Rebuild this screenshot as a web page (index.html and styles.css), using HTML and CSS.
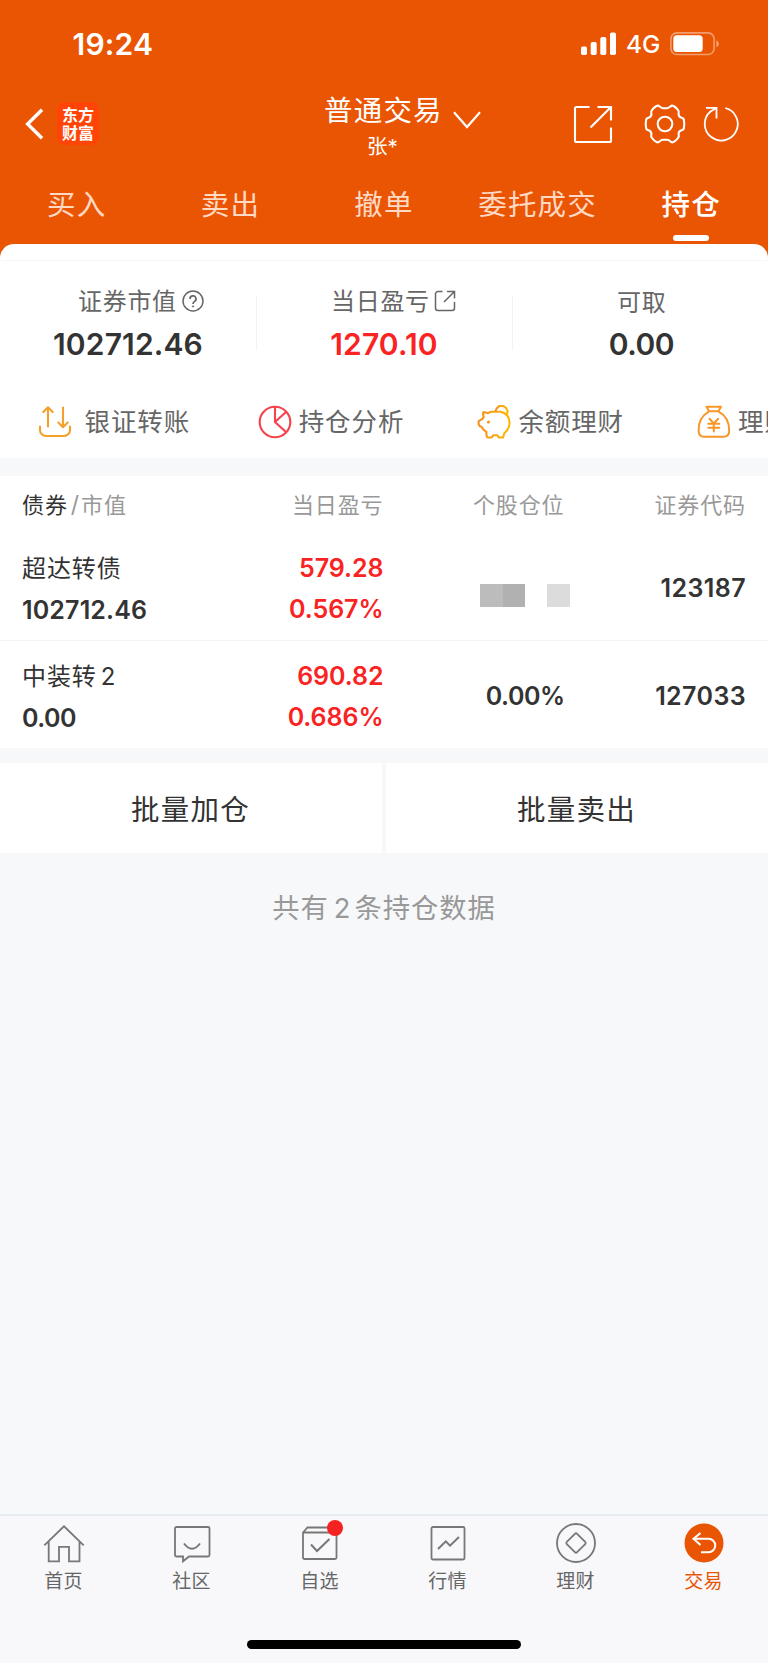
FILE: index.html
```html
<!DOCTYPE html>
<html lang="zh-CN">
<head>
<meta charset="utf-8">
<title>普通交易 - 持仓</title>
<link rel="stylesheet" href="styles.css">
</head>
<body>
<div class="app">
  <header class="header">
    <div class="status">
      <span class="time">19:24</span>
      <div class="status-right">
        <svg class="signal" width="36" height="24" viewBox="0 0 36 24" fill="#fff"><rect x="0" y="14.5" width="6" height="8.5" rx="1.8"/><rect x="9.7" y="10" width="6" height="13" rx="1.8"/><rect x="19.3" y="5" width="6" height="18" rx="1.8"/><rect x="29" y="0.5" width="6" height="22.5" rx="1.8"/></svg>
        <span class="net">4G</span>
        <svg class="battery" width="50" height="24" viewBox="0 0 50 24"><rect x="0.9" y="0.9" width="43.2" height="21.6" rx="6" fill="none" stroke="#fff" stroke-opacity=".42" stroke-width="1.6"/><rect x="3.3" y="3.3" width="29.4" height="16.8" rx="3.6" fill="#fff"/><path d="M46.3 8.2q2.6 1.2 2.6 3.5t-2.6 3.5z" fill="#fff" fill-opacity=".45"/></svg>
      </div>
    </div>
    <div class="nav">
      <div class="nav-left">
        <svg width="20" height="34" viewBox="0 0 20 34" fill="none" stroke="#fff" stroke-width="3.4"><path d="M17 2.8 2.6 17 17 31.2"/></svg>
        <div class="logo"><span>东方</span><span>财富</span></div>
      </div>
      <div class="nav-title">
        <div class="account">普通交易</div>
        <div class="owner">张*</div>
      </div>
      <svg class="caret" width="30" height="20" viewBox="0 0 30 20" fill="none" stroke="#fff" stroke-width="2.2"><path d="M2 2.2 15 17 28 2.2"/></svg>
      <div class="nav-icons">
        <svg width="40" height="40" viewBox="0 0 40 40" fill="none" stroke="#fff" stroke-width="2.1"><path d="M16.500 2H3.500A1.500 1.500 0 0 0 2 3.500v32A1.500 1.500 0 0 0 3.500 37h33A1.500 1.500 0 0 0 38 35.500V22.500M24.500 2h13.500v13.500M38 2 17.500 22.500"/></svg>
        <svg class="gear" width="44" height="44" viewBox="-22 -22 44 44" fill="none" stroke="#fff" stroke-width="2.1" stroke-linejoin="round"><path d="M18.800 -4.500Q19.800 0 18.800 4.500Q18.300 5.800 16.500 6.200Q13.600 7.200 13.600 10Q14.300 12.800 13 14Q11 16.800 8.500 18Q6.800 18.800 5.500 17.600Q3.800 15.800 2 15.800H-2Q-3.800 15.800 -5.500 17.600Q-6.800 18.800 -8.500 18Q-11 16.800 -13 14Q-14.300 12.800 -13.600 10Q-13.600 7.200 -16.500 6.200Q-18.300 5.800 -18.800 4.500Q-19.800 0 -18.800 -4.500Q-18.300 -5.800 -16.500 -6.200Q-13.600 -7.200 -13.600 -10Q-14.300 -12.800 -13 -14Q-11 -16.800 -8.500 -18Q-6.800 -18.800 -5.500 -17.600Q-3.800 -15.800 -2 -15.800H2Q3.800 -15.800 5.500 -17.600Q6.800 -18.800 8.500 -18Q11 -16.800 13 -14Q14.300 -12.800 13.600 -10Q13.600 -7.200 16.500 -6.200Q18.300 -5.800 18.800 -4.500Z"/><circle r="7.300"/></svg>
        <svg class="refresh" width="38" height="38" viewBox="0 0 38 38" fill="none" stroke="#fff" stroke-width="1.800"><path d="M23.300 3A16.500 16.500 0 1 1 8.500 6.500L14.500 2.900M4 2.900H14.500V13.500"/></svg>
      </div>
    </div>
    <nav class="tabs">
      <span class="tab">买入</span><span class="tab">卖出</span><span class="tab">撤单</span><span class="tab">委托成交</span><span class="tab on">持仓</span>
    </nav>
  </header>

  <section class="panel">
    <div class="stats">
      <div class="stat">
        <div class="label">证券市值<svg width="22" height="22" viewBox="0 0 22 22" fill="none" stroke="#666" stroke-width="1.500"><circle cx="11" cy="11" r="10"/><path d="M8 9a3 3 0 1 1 4.600 2.400c-1.100.8-1.600 1.300-1.600 2.500" stroke-width="1.700"/><circle cx="11" cy="16.400" r=".6" fill="#666" stroke-width="1"/></svg></div>
        <div class="value">102712.46</div>
      </div>
      <div class="stat">
        <div class="label">当日盈亏<svg class="out" width="22" height="22" viewBox="0 0 22 22" fill="none" stroke="#666" stroke-width="1.500"><path d="M8.500 1.500H4A2.500 2.500 0 0 0 1.500 4v14A2.500 2.500 0 0 0 4 20.500h14a2.500 2.500 0 0 0 2.500-2.500v-6M13 1.500h7.500v7M20.500 1.500 10 12"/></svg></div>
        <div class="value red">1270.10</div>
      </div>
      <div class="stat">
        <div class="label low">可取</div>
        <div class="value zero">0.00</div>
      </div>
    </div>
    <div class="actions">
      <div class="action wide"><svg width="34" height="34" viewBox="0 0 34 34" fill="none" stroke="#f3a02c" stroke-width="2.100" stroke-linecap="round" stroke-linejoin="round"><path d="M2 21.500v3.500a6 6 0 0 0 6 6h18a6 6 0 0 0 6-6v-3.500M10 21.500V2.500M5.300 7 10 2.300 14.700 7M25 2.500v19.500M20.300 17.500 25 22.200 29.700 17.500"/></svg><span>银证转账</span></div>
      <div class="action"><svg width="34" height="34" viewBox="0 0 34 34" fill="none" stroke="#f5424b" stroke-width="2.100"><circle cx="17" cy="17" r="15.300"/><path d="M17 1.700V17l11.200 10.300M17 17 28.500 6.500"/></svg><span>持仓分析</span></div>
      <div class="action"><svg width="34" height="34" viewBox="0 0 34 34" fill="none" stroke="url(#pig)" stroke-width="2.100" stroke-linejoin="round"><defs><linearGradient id="pig" x1="0" x2="1"><stop stop-color="#f5901e"/><stop offset="1" stop-color="#fbb900"/></linearGradient></defs><path d="M8.800 7.600Q5.700 6.400 6 8.500L6.700 12Q5.600 14.600 2.600 15.500Q1.300 16 1.600 17.700V19.200Q2 21 4.500 21.700Q6 24.800 9.400 27Q9.300 32.500 10.700 32.500H14.800L16.200 30.300H20.500L21.800 32.500H26L27.300 28.300Q32.800 23.500 32.500 17.300Q32 8.500 23.500 6.800H14.500Q12.500 7 11 8.300Z"/><path d="M18.500 6.500A6 6 0 1 1 29.200 10.500"/><circle cx="11.500" cy="17" r="1.600" fill="#f59a18" stroke="none"/></svg><span>余额理财</span></div>
      <div class="action"><svg width="34" height="34" viewBox="0 0 34 34" fill="none" stroke="#f8962a" stroke-width="2" stroke-linecap="round" stroke-linejoin="round"><path d="M9.500 1.700h14.500l-2.600 4.600h-9.300ZM12.100 6.300C5.500 10 1.500 17 1.600 25.500C1.700 30 3.500 31.800 7 31.800H26.500C30.500 31.800 32.200 30 32.200 25.500C32.300 17 28 10 21.400 6.300M12.500 13.800l4.300 4.700 4.300-4.700M11.300 18.800h11M11.300 22.800h11M16.800 18.500v8"/></svg><span>理财</span></div>
    </div>
  </section>

  <section class="holdings">
    <div class="row head">
      <span class="c1"><b>债券</b><i>/</i>市值</span><span class="c2">当日盈亏</span><span class="c3">个股仓位</span><span class="c4">证券代码</span>
    </div>
    <div class="row item line">
      <div class="c1"><div class="name">超达转债</div><div class="num">102712.46</div></div>
      <div class="c2 red num"><div>579.28</div><div>0.567%</div></div>
      <div class="c3"><div class="mask"><span class="m1"></span><span class="m2"></span><span class="m3"></span></div></div>
      <div class="c4 num">123187</div>
    </div>
    <div class="row item">
      <div class="c1"><div class="name">中装转<span class="digit">2</span></div><div class="num zero">0.00</div></div>
      <div class="c2 red num"><div>690.82</div><div>0.686%</div></div>
      <div class="c3 num zero">0.00%</div>
      <div class="c4 num">127033</div>
    </div>
  </section>

  <div class="batch"><div class="btn">批量加仓</div><div class="btn">批量卖出</div></div>
  <main class="rest">共有<span class="digit">2</span>条持仓数据</main>

  <footer class="tabbar">
    <div class="bar-items">
      <div class="bar-item"><svg width="44" height="44" viewBox="0 0 44 44"><path d="M2.300 23.300 22 4.300 41.700 23.300M6.700 19.500V39.300H17V24.800H27V39.300H37.500V19.500"/></svg><span>首页</span></div>
      <div class="bar-item"><svg width="44" height="44" viewBox="0 0 44 44"><path d="M6.500 5h31.500A1.500 1.500 0 0 1 39.500 6.500V33A1.500 1.500 0 0 1 38 34.500H19L13 39.300V34.500H6.500A1.500 1.500 0 0 1 5 33V6.500A1.500 1.500 0 0 1 6.500 5Z"/><path d="M14 21.500q8 10.500 16 0" stroke-width="2"/></svg><span>社区</span></div>
      <div class="bar-item"><svg width="44" height="44" viewBox="0 0 44 44"><path d="M5.500 10.500H37.500A1 1 0 0 1 38.500 11.500V35.500A1.500 1.500 0 0 1 37 37H6.500A1.500 1.500 0 0 1 5 35.500V10.500L9.500 5.500H34.500L38.500 10.500"/><path d="M13 22.500 19 29 31.500 17" stroke-width="2"/></svg><i class="dot"></i><span>自选</span></div>
      <div class="bar-item"><svg width="44" height="44" viewBox="0 0 44 44"><rect x="5.500" y="5" width="33" height="32.500" rx="1.500"/><path d="M12 27 19.800 19.300 24 23.600 33 15" stroke-width="2"/></svg><span>行情</span></div>
      <div class="bar-item"><svg width="44" height="44" viewBox="0 0 44 44"><circle cx="22" cy="21" r="19"/><path d="M20.900 11.800Q22 10.700 23.100 11.800L31.200 19.900Q32.300 21 31.200 22.100L23.100 30.200Q22 31.300 20.900 30.200L12.800 22.100Q11.700 21 12.800 19.900Z"/></svg><span>理财</span></div>
      <div class="bar-item on"><svg width="44" height="44" viewBox="0 0 44 44"><circle cx="22" cy="21" r="19.500" fill="#ea5504" stroke="none"/><path d="M18.500 11 11.500 16.800 18.500 23M11.500 16.800H26.500A6.700 6.700 0 0 1 26.500 30.300H19" stroke="#fff" stroke-width="2"/></svg><span>交易</span></div>
    </div>
    <div class="home"></div>
  </footer>
</div>
</body>
</html>
```
FILE: styles.css
```css
* { box-sizing: border-box; }
body { margin: 0; background: #f7f8fa; font-family: Inter, "Noto Sans CJK SC", sans-serif; color: #333; }
svg { display: block; flex: none; }
.app { width: 768px; height: 1663px; display: flex; flex-direction: column; overflow: hidden; }
.header { height: 260px; flex: none; background: #ea5504; color: #fff; }
.status { height: 88px; display: flex; justify-content: space-between; padding: 0 48px 0 72.500px; }
.time { font-size: 30px; font-weight: 600; line-height: 88px; letter-spacing: .2px; }
.status-right { display: flex; align-items: center; }
.net { font-size: 24.500px; font-weight: 500; line-height: 89px; margin-left: 9px; width: 44px; }
.nav { height: 85px; display: grid; grid-template-columns: 324px 130px 106px 208px; }
.nav-left { display: flex; align-items: flex-start; padding: 19px 0 0 25px; }
.logo { width: 42px; height: 43px; margin: -5px 0 0 12px; border-radius: 8px; background: #ff4405; display: flex; flex-direction: column; align-items: center; justify-content: center; font: 700 16px/17.500px "Noto Sans CJK SC", sans-serif; }
.nav-title { display: flex; flex-direction: column; padding-top: 3px; }
.account { font-size: 28.500px; letter-spacing: 1.200px; line-height: 39px; white-space: nowrap; }
.owner { font-size: 20.500px; line-height: 34px; padding-left: 43px; }
.caret { margin-top: 22px; margin-left: -2px; }
.nav-icons { display: flex; align-items: flex-start; padding: 17px 0 0 13px; }
.gear { margin: -3px 0 0 30px; }
.refresh { margin: 0 0 0 15px; }
.tabs { height: 70px; display: grid; grid-template-columns: repeat(5, 1fr); text-align: center; font-size: 28.500px; letter-spacing: 1.200px; }
.tab { color: #ffd9c4; line-height: 63px; position: relative; }
.tab.on { color: #fff; font-weight: 500; }
.tab.on::after { content: ""; position: absolute; left: 59px; top: 62px; width: 36px; height: 6px; border-radius: 3px; background: #fff; }
.panel { height: 214px; flex: none; margin-top: -16px; background: #fff; border-radius: 14px 14px 0 0; padding-top: 16px; }
.stats { height: 120px; border-top: 1px solid #f5f6f8; display: grid; grid-template-columns: repeat(3, 1fr); padding-top: 24px; }
.stat { position: relative; text-align: center; }
.stat + .stat::before { content: ""; position: absolute; left: 0; top: 11px; width: 1px; height: 54px; background: #f1f2f4; }
.label { display: flex; align-items: center; padding-left: 78px; font-size: 24px; letter-spacing: .700px; line-height: 34px; color: #666; height: 34px; }
.label svg { margin: -2px 0 0 5px; }
.stat:nth-child(2) .label { padding-left: 75px; }
.label svg.out { margin-left: 4px; }
.label.low { padding: 2px 0 0 105px; }
.value { font-size: 30px; font-weight: 600; line-height: 50px; letter-spacing: .150px; }
.value.zero { padding-left: 3px; letter-spacing: -.500px; }
.red { color: #f92323; }
.actions { height: 78px; display: flex; padding: 12px 0 0 38px; overflow: hidden; font-size: 25.500px; letter-spacing: .900px; color: #666; }
.action { width: 219.700px; flex: none; height: 60px; display: flex; align-items: center; gap: 7px; line-height: 62px; white-space: nowrap; }
.action.wide { gap: 12.500px; }
.holdings { height: 272px; flex: none; margin-top: 18px; background: #fff; }
.row { display: grid; grid-template-columns: 200px 161.500px 181px 181.500px; padding-left: 22px; }
.row > :not(.c1) { text-align: right; }
.head { height: 58px; line-height: 58px; font-size: 22px; letter-spacing: .900px; color: #999; }
.head b { font-weight: 400; color: #333; }
.head i { font-style: normal; font-size: 23px; margin: 0 1px 0 3px; }
.item { height: 107px; line-height: 41px; }
.item.line { border-bottom: 1px solid #f2f3f5; }
.c1, .c2 { padding-top: 14px; }
.head .c1, .head .c2 { padding-top: 0; }
.item:last-child { padding-top: 1px; }
.name { font-size: 24px; letter-spacing: .900px; line-height: 42px; }
.name + .num { line-height: 40px; }
.num { font-size: 25px; font-weight: 600; letter-spacing: .150px; }
.num.zero { letter-spacing: -.500px; }
.c2.num { padding-left: 1px; letter-spacing: -.050px; }
.item .c3.num, .item .c4.num { padding-top: 34px; }
.item .c4.num { letter-spacing: .400px; }
.mask { display: flex; margin: 50px 0 0 96.500px; height: 23px; }
.mask span { width: 22.500px; flex: none; }
.m1 { background: #bcbcbc; }
.m2 { background: #b1b1b1; }
.mask .m3 { background: #dcdcdc; margin-left: 22px; }
.digit { margin: 0 4px; }
.rest .digit { margin: 0 3px 0 5px; }
.batch { flex: none; margin-top: 15px; height: 90px; display: grid; grid-template-columns: 1fr 1fr; gap: 4px; }
.btn { background: #fff; text-align: center; font-size: 28.500px; letter-spacing: 1.300px; line-height: 87px; padding: 3px 1px 0 0; }
.rest { flex: 1; text-align: center; color: #999; font-size: 27.300px; letter-spacing: 1px; line-height: 111px; }
.tabbar { flex: none; height: 149px; border-top: 2px solid #e8eaf1; background: #f8f8fb; }
.bar-items { height: 124px; display: grid; grid-template-columns: repeat(6, 1fr); padding-top: 6px; }
.bar-item { position: relative; display: flex; flex-direction: column; align-items: center; font-size: 19px; letter-spacing: .300px; line-height: 31px; color: #666; }
.bar-item span { margin-right: 1px; }
.bar-item svg { fill: none; stroke: #777; stroke-width: 1.800; }
.bar-item.on { color: #ea5504; }
.dot { position: absolute; left: 71px; top: -2.500px; width: 16px; height: 16px; border-radius: 50%; background: #f52222; }
.home { width: 274px; height: 9px; margin: 0 auto; border-radius: 5px; background: #000; }
```
